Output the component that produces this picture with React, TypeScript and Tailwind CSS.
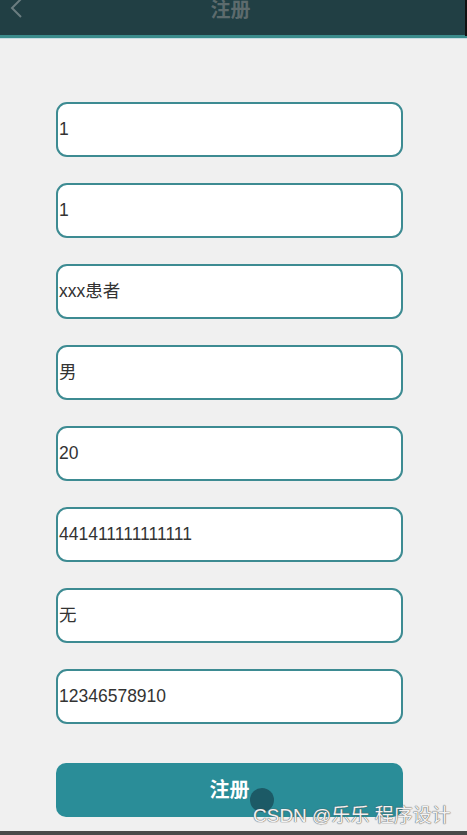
const fields = ['1', '1', 'xxx患者', '男', '20', '441411111111111', '无', '12346578910']

export default function App() {
  return (
    <div className="relative flex h-[835px] w-[467px] flex-col overflow-hidden bg-[#f0f0f0] font-['Liberation_Sans','Noto_Sans_CJK_SC',sans-serif]">
      <header className="relative flex h-[38px] shrink-0 items-start justify-center border-b-[3px] border-[#3b8c8c] bg-[#213f44]">
        <svg className="absolute left-[8px] top-[-2px]" width="16" height="22" viewBox="0 0 16 22" fill="none">
          <path d="M13 1 L4 10 L13 19" stroke="#6b7d80" strokeWidth="2" />
        </svg>
        <h1 className="mr-[6px] text-[20px] leading-[20px] font-bold text-[#5d6b6d]">注册</h1>
      </header>
      <div className="h-px bg-[#c9dde3]" />

      <main className="flex flex-1 flex-col pl-[56px] pt-[63px]">
        <div className="flex flex-col gap-[26px]">
          {fields.map((v, i) => (
            <div
              key={i}
              className="flex h-[55px] w-[347px] items-center rounded-[11px] border-2 border-[#3d8b92] bg-white pl-[1px] text-[17.5px] text-[#333]"
            >
              {v}
            </div>
          ))}
        </div>
        <button className="mt-[39px] flex h-[54px] w-[347px] items-center justify-center rounded-[10px] bg-[#2a8d98] pb-[1px] text-[20px] font-bold text-white">
          注册
        </button>
      </main>

      <div className="h-[4px] shrink-0 bg-[#4a4a4a]" />
      <div className="absolute right-0 top-0 h-[36px] w-[2px] bg-[#111]" />

      <div className="absolute left-[250px] top-[788px] h-[24px] w-[24px] rounded-full bg-[#1c5a66]" />
      <div className="absolute left-[253px] top-[804px] text-[19px] leading-[24px] text-[#f2f2f2] [text-shadow:0_0_1px_#555,0_0_1px_#555]">
        CSDN @乐乐 程序设计
      </div>
    </div>
  )
}
